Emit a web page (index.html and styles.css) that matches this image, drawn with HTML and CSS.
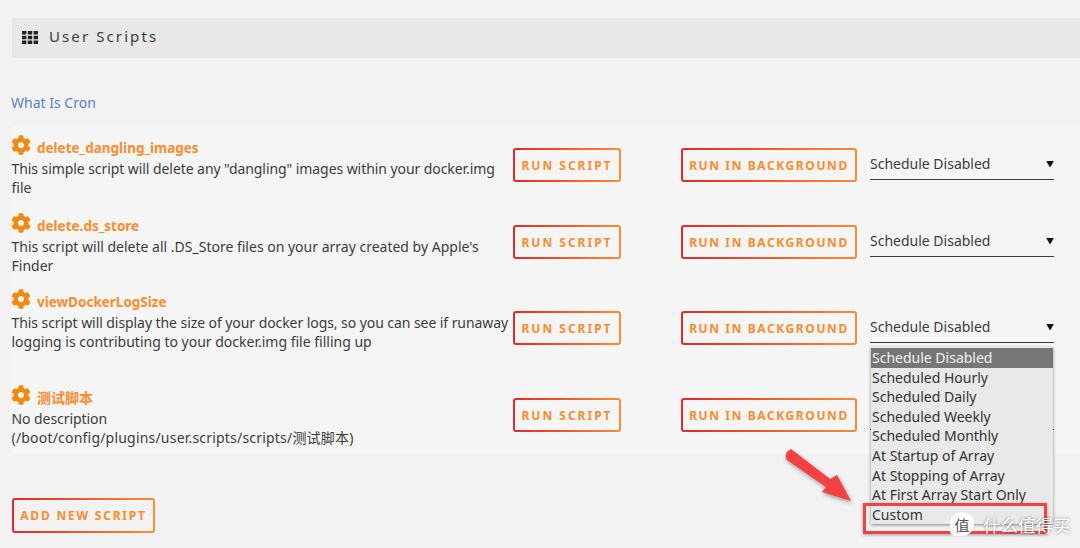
FILE: index.html
```html
<!DOCTYPE html>
<html lang="en">
<head>
<meta charset="utf-8">
<title>User Scripts</title>
<link rel="stylesheet" href="styles.css">
</head>
<body>
<main class="page">
  <header class="title-bar">
    <svg class="grid-icon" viewBox="0 0 16 13" aria-hidden="true"><path d="M0 0h4.400v3.600H0zM5.800 0h4.400v3.600H5.800zM11.600 0H16v3.600h-4.400zM0 4.700h4.400v3.600H0zM5.800 4.700h4.400v3.600H5.800zM11.600 4.700H16v3.600h-4.400zM0 9.400h4.400V13H0zM5.800 9.400h4.400V13H5.800zM11.600 9.400H16V13h-4.400z"/></svg>
    <h1 class="title">User Scripts</h1>
  </header>
  <a class="cron-link" href="#">What Is Cron</a>
  <section class="script-table">
    <article class="row row-a">
      <div class="info">
        <div class="name-line"><svg class="gear" viewBox="0 0 512 512" aria-hidden="true"><path d="M487.4 315.7l-42.6-24.6c4.3-23.2 4.3-47 0-70.2l42.6-24.6c4.9-2.8 7.1-8.6 5.5-14-11.1-35.6-30-67.8-54.7-94.6-3.8-4.1-10-5.1-14.8-2.3L380.8 110c-17.9-15.4-38.5-27.3-60.8-35.1V25.8c0-5.6-3.9-10.5-9.4-11.7-36.7-8.2-74.3-7.8-109.2 0-5.5 1.2-9.4 6.1-9.4 11.7V75c-22.2 7.9-42.8 19.8-60.8 35.1L88.7 85.5c-4.9-2.8-11-1.9-14.8 2.3-24.7 26.7-43.6 58.9-54.7 94.6-1.7 5.4.6 11.2 5.5 14L67.3 221c-4.3 23.2-4.3 47 0 70.2l-42.6 24.6c-4.9 2.8-7.1 8.6-5.5 14 11.1 35.6 30 67.8 54.7 94.6 3.8 4.1 10 5.1 14.8 2.3l42.6-24.6c17.9 15.4 38.5 27.3 60.8 35.1v49.2c0 5.6 3.9 10.5 9.4 11.7 36.7 8.2 74.3 7.8 109.2 0 5.5-1.2 9.4-6.1 9.4-11.7v-49.2c22.2-7.9 42.8-19.8 60.8-35.1l42.6 24.6c4.9 2.8 11 1.9 14.8-2.3 24.7-26.7 43.6-58.9 54.7-94.6 1.5-5.5-.7-11.3-5.6-14.1zM256 336c-44.1 0-80-35.9-80-80s35.9-80 80-80 80 35.9 80 80-35.9 80-80 80z"/></svg><span class="name">delete_dangling_images</span></div>
        <p class="desc"><span class="tight">This simple script will delete any "dangling" images within your docker.img</span><br>file</p>
      </div>
      <button class="btn btn-run">RUN SCRIPT</button>
      <button class="btn btn-bg">RUN IN BACKGROUND</button>
      <div class="select"><span>Schedule Disabled</span><span class="caret">▼</span></div>
    </article>
    <article class="row row-b">
      <div class="info">
        <div class="name-line"><svg class="gear" viewBox="0 0 512 512" aria-hidden="true"><path d="M487.4 315.7l-42.6-24.6c4.3-23.2 4.3-47 0-70.2l42.6-24.6c4.9-2.8 7.1-8.6 5.5-14-11.1-35.6-30-67.8-54.7-94.6-3.8-4.1-10-5.1-14.8-2.3L380.8 110c-17.9-15.4-38.5-27.3-60.8-35.1V25.8c0-5.6-3.9-10.5-9.4-11.7-36.7-8.2-74.3-7.8-109.2 0-5.5 1.2-9.4 6.1-9.4 11.7V75c-22.2 7.9-42.8 19.8-60.8 35.1L88.7 85.5c-4.9-2.8-11-1.9-14.8 2.3-24.7 26.7-43.6 58.9-54.7 94.6-1.7 5.4.6 11.2 5.5 14L67.3 221c-4.3 23.2-4.3 47 0 70.2l-42.6 24.6c-4.9 2.8-7.1 8.6-5.5 14 11.1 35.6 30 67.8 54.7 94.6 3.8 4.1 10 5.1 14.8 2.3l42.6-24.6c17.9 15.4 38.5 27.3 60.8 35.1v49.2c0 5.6 3.9 10.5 9.4 11.7 36.7 8.2 74.3 7.8 109.2 0 5.5-1.2 9.4-6.1 9.4-11.7v-49.2c22.2-7.9 42.8-19.8 60.8-35.1l42.6 24.6c4.9 2.8 11 1.9 14.8-2.3 24.7-26.7 43.6-58.9 54.7-94.6 1.5-5.5-.7-11.3-5.6-14.1zM256 336c-44.1 0-80-35.9-80-80s35.9-80 80-80 80 35.9 80 80-35.9 80-80 80z"/></svg><span class="name">delete.ds_store</span></div>
        <p class="desc">This script will delete all .DS_Store files on your array created by Apple's<br>Finder</p>
      </div>
      <button class="btn btn-run">RUN SCRIPT</button>
      <button class="btn btn-bg">RUN IN BACKGROUND</button>
      <div class="select"><span>Schedule Disabled</span><span class="caret">▼</span></div>
    </article>
    <article class="row row-c">
      <div class="info">
        <div class="name-line"><svg class="gear" viewBox="0 0 512 512" aria-hidden="true"><path d="M487.4 315.7l-42.6-24.6c4.3-23.2 4.3-47 0-70.2l42.6-24.6c4.9-2.8 7.1-8.6 5.5-14-11.1-35.6-30-67.8-54.7-94.6-3.8-4.1-10-5.1-14.8-2.3L380.8 110c-17.9-15.4-38.5-27.3-60.8-35.1V25.8c0-5.6-3.9-10.5-9.4-11.7-36.7-8.2-74.3-7.8-109.2 0-5.5 1.2-9.4 6.1-9.4 11.7V75c-22.2 7.9-42.8 19.8-60.8 35.1L88.7 85.5c-4.9-2.8-11-1.9-14.8 2.3-24.7 26.7-43.6 58.9-54.7 94.6-1.7 5.4.6 11.2 5.5 14L67.3 221c-4.3 23.2-4.3 47 0 70.2l-42.6 24.6c-4.9 2.8-7.1 8.6-5.5 14 11.1 35.6 30 67.8 54.7 94.6 3.8 4.1 10 5.1 14.8 2.3l42.6-24.6c17.9 15.4 38.5 27.3 60.8 35.1v49.2c0 5.6 3.9 10.5 9.4 11.7 36.7 8.2 74.3 7.8 109.2 0 5.5-1.2 9.4-6.1 9.4-11.7v-49.2c22.2-7.9 42.8-19.8 60.8-35.1l42.6 24.6c4.9 2.8 11 1.9 14.8-2.3 24.7-26.7 43.6-58.9 54.7-94.6 1.5-5.5-.7-11.3-5.6-14.1zM256 336c-44.1 0-80-35.9-80-80s35.9-80 80-80 80 35.9 80 80-35.9 80-80 80z"/></svg><span class="name">viewDockerLogSize</span></div>
        <p class="desc"><span class="tight">This script will display the size of your docker logs, so you can see if runaway</span><br>logging is contributing to your docker.img file filling up</p>
      </div>
      <button class="btn btn-run">RUN SCRIPT</button>
      <button class="btn btn-bg">RUN IN BACKGROUND</button>
      <div class="select"><span>Schedule Disabled</span><span class="caret">▼</span>
        <ul class="menu">
          <li class="option option-active">Schedule Disabled</li>
          <li class="option">Scheduled Hourly</li>
          <li class="option">Scheduled Daily</li>
          <li class="option">Scheduled Weekly</li>
          <li class="option">Scheduled Monthly</li>
          <li class="option">At Startup of Array</li>
          <li class="option">At Stopping of Array</li>
          <li class="option">At First Array Start Only</li>
          <li class="option">Custom</li>
        </ul>
      </div>
    </article>
    <article class="row row-a">
      <div class="info">
        <div class="name-line"><svg class="gear" viewBox="0 0 512 512" aria-hidden="true"><path d="M487.4 315.7l-42.6-24.6c4.3-23.2 4.3-47 0-70.2l42.6-24.6c4.9-2.8 7.1-8.6 5.5-14-11.1-35.6-30-67.8-54.7-94.6-3.8-4.1-10-5.1-14.8-2.3L380.8 110c-17.9-15.4-38.5-27.3-60.8-35.1V25.8c0-5.6-3.9-10.5-9.4-11.7-36.7-8.2-74.3-7.8-109.2 0-5.5 1.2-9.4 6.1-9.4 11.7V75c-22.2 7.9-42.8 19.8-60.8 35.1L88.7 85.5c-4.9-2.8-11-1.9-14.8 2.3-24.7 26.7-43.6 58.9-54.7 94.6-1.7 5.4.6 11.2 5.5 14L67.3 221c-4.3 23.2-4.3 47 0 70.2l-42.6 24.6c-4.9 2.8-7.1 8.6-5.5 14 11.1 35.6 30 67.8 54.7 94.6 3.8 4.1 10 5.1 14.8 2.3l42.6-24.6c17.9 15.4 38.5 27.3 60.8 35.1v49.2c0 5.6 3.9 10.5 9.4 11.7 36.7 8.2 74.3 7.8 109.2 0 5.5-1.2 9.4-6.1 9.4-11.7v-49.2c22.2-7.9 42.8-19.8 60.8-35.1l42.6 24.6c4.9 2.8 11 1.9 14.8-2.3 24.7-26.7 43.6-58.9 54.7-94.6 1.5-5.5-.7-11.3-5.6-14.1zM256 336c-44.1 0-80-35.9-80-80s35.9-80 80-80 80 35.9 80 80-35.9 80-80 80z"/></svg><span class="name name-cjk">测试脚本</span></div>
        <p class="desc"><span class="tight">No description</span><br><span class="wide">(/boot/config/plugins/user.scripts/scripts/测试脚本)</span></p>
      </div>
      <button class="btn btn-run">RUN SCRIPT</button>
      <button class="btn btn-bg">RUN IN BACKGROUND</button>
      <div class="select select-covered"></div>
    </article>
  </section>
  <button class="btn btn-add">ADD NEW SCRIPT</button>
</main>
<svg class="arrow" viewBox="0 0 80 70" aria-hidden="true"><path d="M7 3 L46 33 L53 29 L67 55 L38 46 L42 41 L3 14 Q-1 7 7 3 Z"/></svg>
<div class="highlight"></div>
<div class="watermark"><div class="wm-logo"><span class="wm-glyph">值</span></div><span class="wm-text">什么值得买</span></div>
</body>
</html>
```

FILE: styles.css
```css
* {
  box-sizing: border-box;
}

html,
body {
  margin: 0;
  height: 548px;
  overflow: hidden;
}

body {
  position: relative;
  background: #f2f2f2;
  color: #3c3c3c;
  font-family: "Noto Sans", "Noto Sans CJK SC", sans-serif;
  font-size: 14px;
}

.page {
  display: flex;
  flex-direction: column;
  align-items: stretch;
  padding: 18px 0 0 12px;
}

.title-bar {
  display: flex;
  align-items: center;
  gap: 11px;
  height: 40px;
  padding-left: 10px;
  background: #e8e8e8;
}

.grid-icon {
  width: 16px;
  height: 13px;
  fill: #222;
  margin-top: -2px;
}

.title {
  margin: -4px 0 0;
  font-size: 15px;
  font-weight: 400;
  letter-spacing: 2.1px;
  color: #3c3c3c;
}

.cron-link {
  margin-top: 35px;
  margin-left: -1px;
  height: 19px;
  line-height: 19px;
  color: #5b7fc7;
  text-decoration: none;
}

.script-table {
  margin-top: 14px;
  background: #f5f5f5;
}

.row {
  display: grid;
  grid-template-columns: 501px 168px 189px 184px;
  align-items: center;
}

.row-a {
  height: 78px;
}

.row-b {
  height: 76px;
}

.row-c {
  height: 96px;
}

.info {
  align-self: start;
  padding-top: 10px;
}

.name-line {
  display: flex;
  align-items: center;
  gap: 5px;
  height: 22px;
  margin-left: -1px;
}

.gear {
  width: 20px;
  height: 20px;
  fill: #ef8a0e;
  margin-top: -4px;
}

.name {
  margin: 2px 0 0 1px;
  font-size: 13.5px;
  font-weight: 700;
  color: #ff8c2f;
}

.name-cjk {
  margin-top: 0;
  font-size: 14px;
}

.desc {
  margin: 2px 0 0 -0.5px;
  line-height: 18.5px;
  color: #3c3c3c;
  white-space: nowrap;
}

.tight {
  letter-spacing: -0.07px;
}

.wide {
  letter-spacing: 0.2px;
}

.btn {
  height: 34px;
  padding: 0;
  border: 2px solid transparent;
  border-radius: 3px;
  background:
    linear-gradient(#f5f5f5, #f5f5f5) padding-box,
    linear-gradient(90deg, #e22828, #ff8c2f) border-box;
  color: #ff8c2f;
  font-family: "Noto Sans", sans-serif;
  font-size: 12px;
  font-weight: 700;
  letter-spacing: 2px;
}

.btn-run {
  width: 108px;
}

.btn-bg {
  width: 176px;
  letter-spacing: 1.6px;
}

.btn-add {
  align-self: flex-start;
  width: 143px;
  height: 35px;
  margin-top: 44px;
  background:
    linear-gradient(#f2f2f2, #f2f2f2) padding-box,
    linear-gradient(90deg, #e22828, #ff8c2f) border-box;
  letter-spacing: 1.8px;
}

.select {
  position: relative;
  display: flex;
  justify-content: space-between;
  align-items: center;
  height: 30px;
  padding-bottom: 2px;
  border-bottom: 1px solid #3c3c3c;
  color: #3c3c3c;
}

.caret {
  font-size: 8px;
  color: #111;
  padding-right: 0;
}

.menu {
  position: absolute;
  z-index: 2;
  top: 34px;
  left: 1px;
  width: 182px;
  margin: 0;
  padding: 1px 0 0;
  list-style: none;
  background: #e9e9e9;
  box-shadow: 0 1px 3px rgba(0, 0, 0, 0.45);
}

.option {
  height: 19.6px;
  line-height: 19.6px;
  padding-left: 1px;
  color: #333;
}

.option-active {
  background: #767676;
  color: #f2f2f2;
}

.arrow {
  position: absolute;
  z-index: 3;
  left: 784px;
  top: 446px;
  width: 80px;
  height: 70px;
  fill: #f44141;
  filter: drop-shadow(1px 2px 2px rgba(0, 0, 0, 0.35));
}

.highlight {
  position: absolute;
  z-index: 3;
  left: 863px;
  top: 503px;
  width: 184px;
  height: 31px;
  border: 3px solid #f44141;
  box-shadow: 0 1px 3px rgba(0, 0, 0, 0.35);
}

.watermark {
  position: absolute;
  z-index: 4;
  left: 950px;
  top: 512px;
  display: flex;
  align-items: center;
  gap: 9px;
  height: 24px;
}

.wm-logo {
  display: flex;
  align-items: center;
  justify-content: center;
  width: 24px;
  height: 24px;
  border-radius: 50% 50% 50% 20%;
  background: #fff;
}

.wm-glyph {
  font-family: "Noto Sans CJK SC", sans-serif;
  font-size: 15px;
  line-height: 1;
  color: #555;
}

.wm-text {
  font-family: "Noto Sans CJK SC", sans-serif;
  font-size: 17.5px;
  color: #fff;
  text-shadow: 0 0 3px rgba(0, 0, 0, 0.5);
}
```
